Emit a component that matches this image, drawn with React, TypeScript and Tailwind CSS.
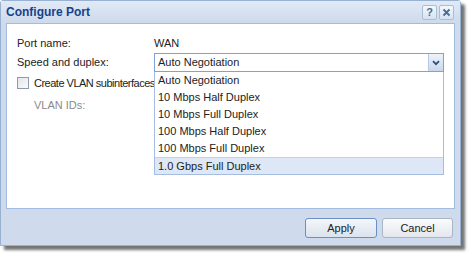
import React from 'react';

const options = [
  'Auto Negotiation',
  '10 Mbps Half Duplex',
  '10 Mbps Full Duplex',
  '100 Mbps Half Duplex',
  '100 Mbps Full Duplex',
  '1.0 Gbps Full Duplex',
];

const ToolButton: React.FC<{ children: React.ReactNode }> = ({ children }) => (
  <div className="w-[15px] h-[15px] border border-[#a9bfd6] rounded-[2px] bg-gradient-to-b from-[#f4f8fc] to-[#d6e2f0] flex items-center justify-center text-[#4a6a92] text-[11px] font-bold leading-none">
    {children}
  </div>
);

const ConfigurePort: React.FC = () => {
  const selected = 5;
  return (
    <div className="w-[461px] h-[246px] flex flex-col bg-[#cfdbec] border border-[#99b1d0] rounded-t-[3px] shadow-[4px_4px_3px_rgba(0,0,0,0.55)]">
      {/* header */}
      <div className="h-[22px] flex items-center justify-between pl-[5px] pr-[6px] bg-gradient-to-b from-[#e1eaf6] to-[#cddaeb]">
        <span className="text-[12px] font-bold text-[#15428b]">Configure Port</span>
        <div className="flex gap-[2px]">
          <ToolButton>?</ToolButton>
          <ToolButton>
            <svg width="9" height="9" viewBox="0 0 9 9">
              <path d="M1.5 1.5 L7.5 7.5 M7.5 1.5 L1.5 7.5" stroke="#4a6a92" strokeWidth="1.8" />
            </svg>
          </ToolButton>
        </div>
      </div>

      {/* body */}
      <div className="px-[5px]">
        <div className="h-[186px] bg-white border border-[#a3bde0] pt-[11px] pl-[10px] pr-[10px] text-[11px] text-[#222]">
          <div className="flex items-center h-[16px]">
            <span className="w-[137px]">Port name:</span>
            <span>WAN</span>
          </div>
          <div className="flex items-center mt-[2px]">
            <span className="w-[137px]">Speed and duplex:</span>
            <div className="relative flex-1">
              <div className="h-[19px] flex border border-[#7fa3d6] bg-white">
                <span className="flex-1 pl-[3px] leading-[17px]">{options[0]}</span>
                <div className="w-[15px] border-l border-[#b5c9e4] bg-gradient-to-b from-[#eef3fa] to-[#c9d8ec] flex items-center justify-center">
                  <svg width="8" height="6" viewBox="0 0 8 6">
                    <path d="M1 1.2 L4 4.2 L7 1.2" stroke="#2c4f7e" strokeWidth="1.8" fill="none" />
                  </svg>
                </div>
              </div>
              <div className="absolute left-0 right-0 top-[19px] bg-white border border-t-0 border-[#a5bde0]">
                {options.map((o, i) => (
                  <div
                    key={o}
                    className={`h-[17px] pl-[3px] leading-[17px] ${i === selected ? 'bg-[#dde7f5] border-t border-[#c2d2ea]' : ''}`}
                  >
                    {o}
                  </div>
                ))}
              </div>
            </div>
          </div>
          <div className="flex items-center mt-[3px]">
            <div className="w-[12px] h-[12px] border border-[#8d9aab] bg-gradient-to-br from-[#e2e5ea] to-[#fbfbfc] mr-[5px]" />
            <span className="tracking-[-0.5px]">Create VLAN subinterfaces</span>
          </div>
          <div className="mt-[5px] pl-[17px] text-[#8a8a8a]">VLAN IDs:</div>
        </div>
      </div>

      {/* footer */}
      <div className="flex-1 flex items-center justify-end gap-[5px] pr-[7px] pt-[2px]">
        <button className="w-[72px] h-[20px] border border-[#6c8fc4] rounded-[3px] bg-gradient-to-b from-[#f4f6fa] to-[#dbe3ee] text-[11px] text-[#222]">
          Apply
        </button>
        <button className="w-[71px] h-[20px] border border-[#a9b6c6] rounded-[3px] bg-gradient-to-b from-[#fafbfc] to-[#e3e7ed] text-[11px] text-[#222]">
          Cancel
        </button>
      </div>
    </div>
  );
};

export default function App() {
  return (
    <div className="w-[474px] h-[261px] bg-white overflow-hidden" style={{ fontFamily: '"Liberation Sans", Arial, sans-serif' }}>
      <ConfigurePort />
    </div>
  );
}
